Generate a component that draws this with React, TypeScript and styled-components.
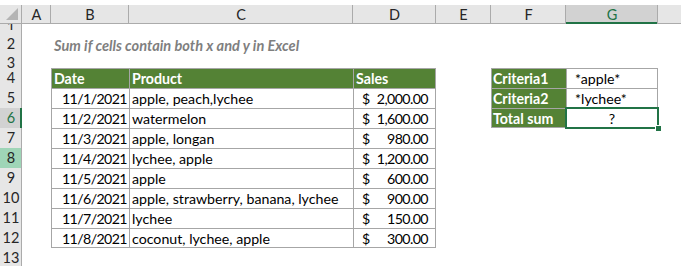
import React from 'react'
import styled, { createGlobalStyle, css } from 'styled-components'

const colors = {
  header: '#e6e6e6',
  headerActive: '#d2d2d2',
  headerLine: '#ababab',
  excelGreen: '#217346',
  rowHover: '#9fd5b7',
  tableGreen: '#548235',
  border: '#a6a6a6',
  title: '#7f7f7f',
  text: '#000000'
}

const GlobalStyle = createGlobalStyle`
  html, body {
    margin: 0;
    padding: 0;
    background: #ffffff;
  }
`

// row header gutter, then columns A..G and the start of the next one
const columnWidths = [22, 29, 78, 224, 83, 55, 75, 92, 90]
const columnLetters = ['A', 'B', 'C', 'D', 'E', 'F', 'G', '']
const rowHeights = [6, 27, 11, 20, 20, 20, 20, 20, 20, 20, 20, 20, 20]

const Viewport = styled.div`
  width: 681px;
  height: 266px;
  overflow: hidden;
`

const Sheet = styled.div`
  display: grid;
  grid-template-columns: ${columnWidths.map((w) => `${w}px`).join(' ')};
  grid-template-rows: 24px ${rowHeights.map((h) => `${h}px`).join(' ')};
  font-family: Lato, 'Liberation Sans', sans-serif;
  font-size: 14.2px;
  color: ${colors.text};
`

const Corner = styled.div`
  margin-top: 5px;
  background: ${colors.header};
  box-shadow: inset -1px -1px 0 ${colors.headerLine};
  display: flex;
  align-items: flex-end;
  justify-content: flex-end;
  padding: 0 4px 4px 0;
`

const ColHeader = styled.div<{ $active?: boolean }>`
  margin-top: 5px;
  display: flex;
  align-items: center;
  justify-content: center;
  font-size: 14.5px;
  color: #262626;
  background: ${colors.header};
  box-shadow: inset -1px 0 0 ${colors.headerLine}, inset 0 -1px 0 ${colors.headerLine};

  ${({ $active }) =>
    $active &&
    css`
      background: ${colors.headerActive};
      color: ${colors.excelGreen};
      box-shadow: inset -1px 0 0 ${colors.headerLine}, inset 0 -2px 0 ${colors.excelGreen};
    `}
`

type RowState = 'none' | 'active' | 'hover'

const rowHeaderBg: Record<RowState, string> = {
  none: colors.header,
  active: colors.headerActive,
  hover: colors.rowHover
}

const RowHeader = styled.div<{ $state: RowState }>`
  display: flex;
  align-items: center;
  justify-content: center;
  overflow: hidden;
  font-size: 14.5px;
  line-height: 20px;
  color: ${({ $state }) => ($state === 'active' ? colors.excelGreen : '#262626')};
  background: ${({ $state }) => rowHeaderBg[$state]};
  box-shadow: ${({ $state }) =>
    $state === 'active'
      ? `inset -2px 0 0 ${colors.excelGreen}`
      : `inset -1px 0 0 ${colors.headerLine}`};
`

interface Edges {
  $top?: boolean
  $left?: boolean
  $right?: boolean
  $bottom?: boolean
}

const edgeShadow = ({ $top, $left, $right, $bottom }: Edges): string => {
  const lines: string[] = []
  if ($top === true) lines.push(`inset 0 1px 0 ${colors.border}`)
  if ($left === true) lines.push(`inset 1px 0 0 ${colors.border}`)
  if ($right === true) lines.push(`inset -1px 0 0 ${colors.border}`)
  if ($bottom === true) lines.push(`inset 0 -1px 0 ${colors.border}`)
  return lines.length > 0 ? lines.join(', ') : 'none'
}

type Align = 'left' | 'right' | 'center'

const justify: Record<Align, string> = {
  left: 'flex-start',
  right: 'flex-end',
  center: 'center'
}

const Cell = styled.div<Edges & { $green?: boolean; $align?: Align; $pad?: number }>`
  display: flex;
  align-items: center;
  justify-content: ${({ $align }) => justify[$align ?? 'left']};
  padding: 0 ${({ $pad }) => $pad ?? 3}px;
  white-space: nowrap;
  overflow: visible;
  background: ${({ $green }) => ($green === true ? colors.tableGreen : 'transparent')};
  color: ${({ $green }) => ($green === true ? '#ffffff' : colors.text)};
  font-weight: ${({ $green }) => ($green === true ? 700 : 400)};
  box-shadow: ${edgeShadow};
`

// numbers set a touch tighter so they sit like the narrow spreadsheet font
const DateCell = styled(Cell)`
  letter-spacing: -0.6px;
`

const MoneyCell = styled(Cell)`
  justify-content: space-between;
  padding: 0 8px 0 9px;
  letter-spacing: -0.6px;
`

const SelectedCell = styled(Cell)`
  position: relative;

  &::before {
    content: '';
    position: absolute;
    inset: -1px;
    border: 2px solid ${colors.excelGreen};
    z-index: 1;
  }

  &::after {
    content: '';
    position: absolute;
    right: -3px;
    bottom: -3px;
    width: 5px;
    height: 5px;
    background: ${colors.excelGreen};
    outline: 1px solid #ffffff;
    z-index: 2;
  }
`

const Title = styled.div`
  grid-column: 3 / -1;
  display: flex;
  align-items: flex-end;
  padding: 0 0 3px 3px;
  font-size: 14.6px;
  font-weight: 700;
  font-style: italic;
  color: ${colors.title};
  white-space: nowrap;
`

const Empty = styled.div``

const sales = [
  ['11/1/2021', 'apple, peach,lychee', '2,000.00'],
  ['11/2/2021', 'watermelon', '1,600.00'],
  ['11/3/2021', 'apple, longan', '980.00'],
  ['11/4/2021', 'lychee, apple', '1,200.00'],
  ['11/5/2021', 'apple', '600.00'],
  ['11/6/2021', 'apple, strawberry, banana, lychee', '900.00'],
  ['11/7/2021', 'lychee', '150.00'],
  ['11/8/2021', 'coconut, lychee, apple', '300.00']
]

const criteria = [
  ['Criteria1', '*apple*'],
  ['Criteria2', '*lychee*'],
  ['Total sum', '?']
]

// sheet rows 4..12 hold the data table, rows 4..6 the criteria block
const tableCells = (row: number): React.ReactNode[] => {
  if (row === 4) {
    return [
      <Cell key="b" $green $top $left>Date</Cell>,
      <Cell key="c" $green $top $left>Product</Cell>,
      <Cell key="d" $green $top $left $right>Sales</Cell>
    ]
  }
  const item = sales[row - 5]
  const last = row === 12
  return [
    <DateCell key="b" $top $left $bottom={last} $align="right" $pad={2}>{item[0]}</DateCell>,
    <Cell key="c" $top $left $bottom={last}>{item[1]}</Cell>,
    <MoneyCell key="d" $top $left $right $bottom={last}>
      <span>$</span>
      <span>{item[2]}</span>
    </MoneyCell>
  ]
}

const criteriaCells = (row: number): React.ReactNode[] => {
  const [label, value] = criteria[row - 4]
  const last = row === 6
  return [
    <Cell key="f" $green $top $left $bottom={last} $pad={2}>{label}</Cell>,
    last ? (
      <SelectedCell key="g" $top $left $right $bottom $align="center">{value}</SelectedCell>
    ) : (
      <Cell key="g" $top $left $right $pad={9}>{value}</Cell>
    )
  ]
}

const renderRow = (row: number): React.ReactNode[] => {
  if (row === 2) return [<Empty key="a" />, <Title key="title">Sum if cells contain both x and y in Excel</Title>]
  if (row < 4 || row > 12) return columnLetters.map((c, i) => <Empty key={i} />)

  const cells: React.ReactNode[] = [<Empty key="a" />, ...tableCells(row), <Empty key="e" />]
  if (row <= 6) cells.push(...criteriaCells(row))
  else cells.push(<Empty key="f" />, <Empty key="g" />)
  cells.push(<Empty key="h" />)
  return cells
}

const rowState = (row: number): RowState => {
  if (row === 6) return 'active'
  if (row === 8) return 'hover'
  return 'none'
}

export default function App() {
  return (
    <>
      <GlobalStyle />
      <Viewport>
        <Sheet>
          <Corner>
            <svg width="12" height="12" viewBox="0 0 12 12">
              <polygon points="12,0 12,12 0,12" fill="#b4b4b4" />
            </svg>
          </Corner>
          {columnLetters.map((letter, i) => (
            <ColHeader key={i} $active={letter === 'G'}>
              {letter}
            </ColHeader>
          ))}
          {rowHeights.map((_, i) => {
            const row = i + 1
            return (
              <React.Fragment key={row}>
                <RowHeader $state={rowState(row)}>{row}</RowHeader>
                {renderRow(row)}
              </React.Fragment>
            )
          })}
        </Sheet>
      </Viewport>
    </>
  )
}
